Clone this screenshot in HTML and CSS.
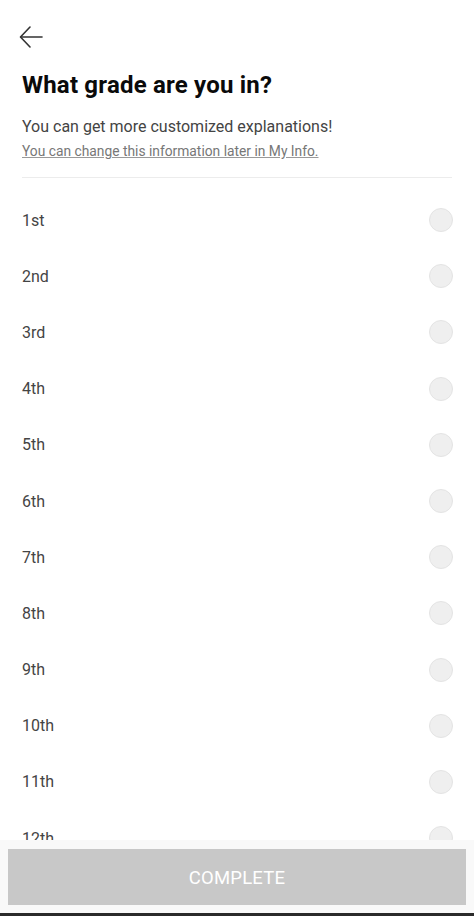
FILE: index.html
```html
<!DOCTYPE html>
<html lang="en">
<head>
<meta charset="utf-8">
<title>What grade are you in?</title>
<link rel="stylesheet" href="styles.css">
</head>
<body>
<div class="screen">
  <header class="top">
    <button class="back" aria-label="Back">
      <svg width="24" height="22" viewBox="0 0 24 22" fill="none" stroke="#333" stroke-width="1.6" stroke-linecap="round" stroke-linejoin="round">
        <path d="M23 11H2"/>
        <path d="M11 1L1.5 11L11 21"/>
      </svg>
    </button>
  </header>
  <main class="content">
    <h1 class="title">What grade are you in?</h1>
    <p class="sub">You can get more customized explanations!</p>
    <p class="note">You can change this information later in My Info.</p>
    <div class="divider"></div>
    <ul class="grades">
      <li class="grade"><span>1st</span><span class="radio"></span></li>
      <li class="grade"><span>2nd</span><span class="radio"></span></li>
      <li class="grade"><span>3rd</span><span class="radio"></span></li>
      <li class="grade"><span>4th</span><span class="radio"></span></li>
      <li class="grade"><span>5th</span><span class="radio"></span></li>
      <li class="grade"><span>6th</span><span class="radio"></span></li>
      <li class="grade"><span>7th</span><span class="radio"></span></li>
      <li class="grade"><span>8th</span><span class="radio"></span></li>
      <li class="grade"><span>9th</span><span class="radio"></span></li>
      <li class="grade"><span>10th</span><span class="radio"></span></li>
      <li class="grade"><span>11th</span><span class="radio"></span></li>
      <li class="grade"><span>12th</span><span class="radio"></span></li>
    </ul>
  </main>
  <footer class="footer">
    <button class="complete">COMPLETE</button>
  </footer>
  <div class="navbar"></div>
</div>
</body>
</html>
```

FILE: styles.css
```css
* { box-sizing: border-box; }
html, body {
  margin: 0;
  padding: 0;
  background: #fff;
  font-family: Roboto, "Liberation Sans", sans-serif;
}
.screen {
  position: relative;
  width: 474px;
  height: 916px;
  overflow: hidden;
  background: #fff;
}
.top {
  height: 58px;
  padding: 26px 0 0 19px;
}
.back {
  border: 0;
  background: none;
  padding: 0;
  display: block;
  width: 24px;
  height: 22px;
}
.content {
  padding: 0 22px;
}
.title {
  margin: 13px 0 0;
  font-size: 24px;
  line-height: 28px;
  font-weight: 700;
  color: #0a0a0a;
  letter-spacing: 0.2px;
}
.sub {
  margin: 18px 0 0;
  font-size: 16px;
  line-height: 20px;
  color: #444;
}
.note {
  margin: 4px 0 0;
  font-size: 13.8px;
  line-height: 20px;
  color: #777;
  text-decoration: underline;
  text-decoration-color: #999;
}
.divider {
  margin-top: 16px;
  height: 1px;
  background: #ececec;
}
.grades {
  list-style: none;
  margin: 14px 0 0;
  padding: 0;
}
.grade {
  height: 56.2px;
  display: flex;
  align-items: center;
  justify-content: space-between;
  font-size: 16px;
  color: #444;
}
.radio {
  width: 24px;
  height: 24px;
  border-radius: 50%;
  background: #efefef;
  border: 1px solid #e4e4e4;
  margin-right: -1px;
}
.footer {
  position: absolute;
  left: 0;
  right: 0;
  top: 840px;
  height: 73px;
  background: #f9f9f9;
  padding: 9px 8px 0 8px;
}
.complete {
  display: block;
  width: 100%;
  height: 56px;
  border: 0;
  padding: 2px 0 0;
  background: #c8c8c8;
  color: #fff;
  font-family: Roboto, "Liberation Sans", sans-serif;
  font-size: 18.5px;
  letter-spacing: 0.2px;
}
.navbar {
  position: absolute;
  left: 0;
  right: 0;
  bottom: 0;
  height: 3px;
  background: #2a2a2a;
}
```
